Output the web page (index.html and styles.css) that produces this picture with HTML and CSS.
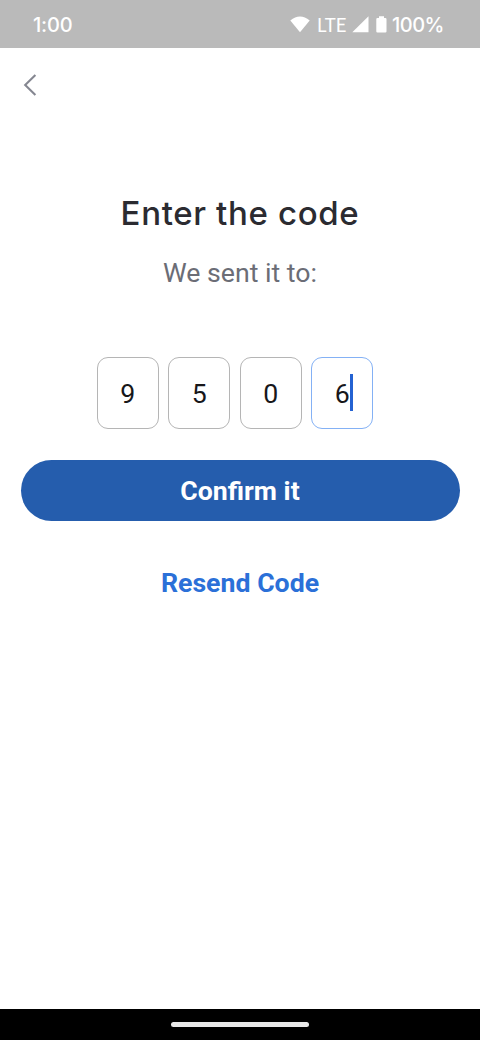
FILE: index.html
```html
<!DOCTYPE html>
<html lang="en">
<head>
<meta charset="utf-8">
<title>Enter the code</title>
<link rel="stylesheet" href="styles.css">
</head>
<body>
<div class="screen">
  <header class="status">
    <span class="clock">1:00</span>
    <div class="indicators">
      <svg class="wifi" width="20" height="17" viewBox="0 0 20 17"><path d="M0.3 4.4Q10-3.6 19.7 4.4L10 16.3Z" fill="#fff"/></svg>
      <span class="network">LTE</span>
      <svg class="signal" width="17" height="17" viewBox="0 0 17 17"><path d="M16.5 0.2V16.3H0.3Z" fill="#fff"/></svg>
      <svg class="battery" width="11" height="17" viewBox="0 0 11 17"><path d="M3 0.2H8V2H9.4Q10.5 2 10.5 3.2V15.5Q10.5 16.6 9.4 16.6H1.4Q0.3 16.6 0.3 15.5V3.2Q0.3 2 1.4 2H3Z" fill="#fff"/></svg>
      <span class="charge">100%</span>
    </div>
  </header>
  <main class="content">
    <nav class="toolbar">
      <svg width="14" height="22" viewBox="0 0 14 22"><path d="M12.4 1L2.2 11L12.4 21" fill="none" stroke="#858791" stroke-width="2.1"/></svg>
    </nav>
    <h1 class="title">Enter the code</h1>
    <p class="subtitle">We sent it to:</p>
    <div class="code">
      <div class="digit">9</div>
      <div class="digit">5</div>
      <div class="digit">0</div>
      <div class="digit active">6<span class="caret"></span></div>
    </div>
    <button class="confirm">Confirm it</button>
    <a class="resend">Resend Code</a>
  </main>
  <footer class="navbar"><div class="handle"></div></footer>
</div>
</body>
</html>
```
FILE: styles.css
```css
* { box-sizing: border-box; }
body { margin: 0; background: #fff; font-family: Roboto, sans-serif; }
.screen { width: 480px; height: 1040px; display: flex; flex-direction: column; }
.status {
  height: 48px;
  flex: none;
  display: flex;
  justify-content: space-between;
  align-items: center;
  padding: 1px 36px 0 33px;
  background: #bababa;
  color: #fff;
  font-family: Inter, sans-serif;
}
.clock { font-size: 20px; font-weight: 500; letter-spacing: -0.2px; }
.indicators { display: flex; align-items: center; }
.network { margin-left: 7px; width: 31px; font: 400 18.5px Lato, sans-serif; }
.signal { margin-left: 4px; }
.battery { margin-left: 7px; }
.charge { margin-left: 5px; width: 52px; font-size: 20px; font-weight: 500; letter-spacing: -0.5px; white-space: nowrap; }
.content { flex: 1; display: flex; flex-direction: column; align-items: center; }
.toolbar { align-self: stretch; height: 73px; padding: 26px 0 0 23px; }
.toolbar svg { display: block; }
.title {
  margin: 72px 0 0;
  font: 500 33px/40px Inter, sans-serif;
  letter-spacing: 0.65px;
  color: #2b2b31;
  white-space: nowrap;
}
.subtitle { margin: 24px 0 0; font-size: 26.7px; line-height: 32px; color: #6b6d76; }
.code { display: flex; gap: 9.5px; margin: 68px 10px 0 0; }
.digit {
  width: 62px;
  height: 72px;
  display: flex;
  align-items: center;
  justify-content: center;
  padding-top: 2px;
  border: 1px solid #b5b5b5;
  border-radius: 11px;
  font-size: 26.7px;
  color: #17171a;
}
.active { border-color: #84b1f5; }
.caret { width: 3px; height: 37px; margin: -3px -3px 0 0; background: #2462d2; }
.confirm {
  width: 439px;
  height: 61px;
  margin-top: 31px;
  padding: 1px 0 0;
  border: 0;
  border-radius: 31px;
  background: #255dad;
  color: #fff;
  font: 700 26.7px/32px Roboto, sans-serif;
}
.resend { margin-top: 46px; font-size: 26.7px; line-height: 32px; font-weight: 700; color: #2b70d8; }
.navbar { height: 31px; flex: none; background: #000; display: flex; justify-content: center; padding-top: 13px; }
.handle { width: 138px; height: 5px; border-radius: 3px; background: #e8e8e8; }
```
